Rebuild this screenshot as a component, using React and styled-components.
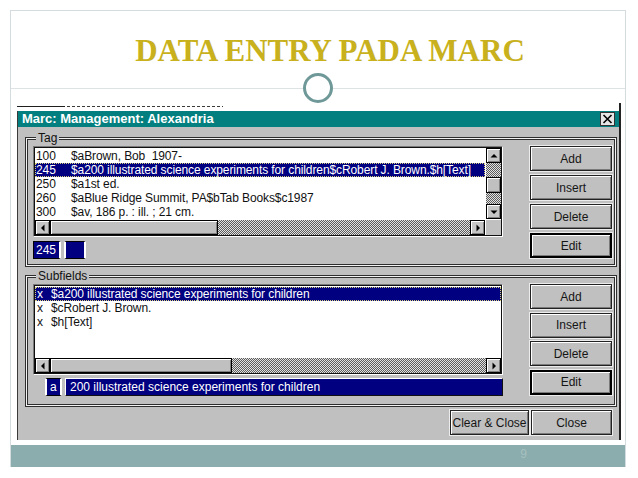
import React from 'react'
import styled, { createGlobalStyle } from 'styled-components'

const GlobalStyle = createGlobalStyle`
  * { box-sizing: border-box; }
  html, body { margin: 0; padding: 0; background: #fff; }
  body {
    width: 638px;
    height: 478px;
    overflow: hidden;
    font-family: "Liberation Sans", Arial, sans-serif;
  }
`

const tagRows = [
  { tag: '100', text: '$aBrown, Bob  1907-' },
  { tag: '245', text: '$a200 illustrated science experiments for children$cRobert J. Brown.$h[Text]', sel: true },
  { tag: '250', text: '$a1st ed.' },
  { tag: '260', text: '$aBlue Ridge Summit, PA$bTab Books$c1987' },
  { tag: '300', text: '$av, 186 p. : ill. ; 21 cm.' },
]

const subRows = [
  { text: '$a200 illustrated science experiments for children', sel: true },
  { text: '$cRobert J. Brown.' },
  { text: '$h[Text]' },
]

const arrowPoints = {
  up: '0.5,5.5 4,2 7.5,5.5',
  down: '0.5,2.5 4,6 7.5,2.5',
  left: '5.5,0.5 2,4 5.5,7.5',
  right: '2.5,0.5 6,4 2.5,7.5',
}

function Arrow({ dir }) {
  return (
    <ArrowBtn>
      <svg width="8" height="8" viewBox="0 0 8 8">
        <polygon points={arrowPoints[dir]} fill="#000" />
      </svg>
    </ArrowBtn>
  )
}

function HScroll({ thumb }) {
  return (
    <HBar>
      <Arrow dir="left" />
      <HThumb $w={thumb} />
      <Track />
      <Arrow dir="right" />
    </HBar>
  )
}

function ButtonStack({ gap }) {
  return (
    <Stack $gap={gap}>
      <WinButton>Add</WinButton>
      <WinButton>Insert</WinButton>
      <WinButton>Delete</WinButton>
      <WinButton $default>Edit</WinButton>
    </Stack>
  )
}

function App() {
  return (
    <>
      <GlobalStyle />
      <Page>
        <Frame>
          <Header>
            <Title>DATA ENTRY PADA MARC</Title>
            <Divider>
              <Rule />
              <Ring />
              <Rule />
            </Divider>
          </Header>

          <Desk>
            <GhostLine />
            <Window>
              <TitleBar>
                <span>Marc: Management: Alexandria</span>
                <CloseBox>
                  <svg width="11" height="10" viewBox="0 0 11 10">
                    <path d="M1.5 1 L9.5 9 M9.5 1 L1.5 9" stroke="#000" strokeWidth="1.6" />
                  </svg>
                </CloseBox>
              </TitleBar>

              <Body>
                <Group $pb={5}>
                  <Legend>Tag</Legend>
                  <LeftCol>
                    <ListBox $vscroll>
                      <Rows>
                        {tagRows.map(r => (
                          <Row key={r.tag} $sel={r.sel}>
                            <TagCell>{r.tag}</TagCell>
                            <span>{r.text}</span>
                          </Row>
                        ))}
                      </Rows>
                      <VBar>
                        <Arrow dir="up" />
                        <VTrack $h={14} />
                        <VThumb />
                        <VTrack />
                        <Arrow dir="down" />
                      </VBar>
                      <HScroll thumb={168} />
                      <Corner />
                    </ListBox>
                    <FieldRow>
                      <CodeBox>245</CodeBox>
                      <IndBox />
                    </FieldRow>
                  </LeftCol>
                  <ButtonStack gap={4} />
                </Group>

                <Group $pb={8}>
                  <Legend>Subfields</Legend>
                  <LeftCol $gap={3}>
                    <ListBox>
                      <Rows>
                        {subRows.map(r => (
                          <Row key={r.text} $sel={r.sel}>
                            <MarkCell>x</MarkCell>
                            <span>{r.text}</span>
                          </Row>
                        ))}
                      </Rows>
                      <HScroll thumb={182} />
                    </ListBox>
                    <SubFieldRow>
                      <SubCode>a</SubCode>
                      <ValueBox>200 illustrated science experiments for children</ValueBox>
                    </SubFieldRow>
                  </LeftCol>
                  <ButtonStack gap={3.5} />
                </Group>

                <BottomRow>
                  <WinButton $w={79}>Clear &amp; Close</WinButton>
                  <WinButton $w={81}>Close</WinButton>
                </BottomRow>
              </Body>
            </Window>
          </Desk>

          <Bar>
            <PageNo>9</PageNo>
          </Bar>
        </Frame>
      </Page>
    </>
  )
}

export default App

const Page = styled.div`
width:638px;
height:478px;
padding:10px 12px 11px 10px;
`

const Frame = styled.div`
height:457px;
border:1px solid #d5dcdf;
border-bottom:none;
display:flex;
flex-direction:column;
`

const Header = styled.header`
padding-top:24px;
`

const Title = styled.h1`
margin:0;
padding-left:24px;
text-align:center;
font:bold 31px/31px "Liberation Serif", "Times New Roman", serif;
color:#c8b11d;
`

const Divider = styled.div`
margin-top:7px;
height:30px;
display:flex;
align-items:center;
`

const Rule = styled.div`
flex:1;
height:1px;
background:#dde2e4;
`

const Ring = styled.div`
width:30px;
height:30px;
border-radius:50%;
border:3px solid #6f9899;
background:#fff;
`

const Desk = styled.div`
height:337px;
margin:0 4px 0 6px;
padding-top:3px;
display:flex;
flex-direction:column;
border-right:2px solid #222;
`

const GhostLine = styled.div`
width:206px;
height:2px;
margin-bottom:4px;
background:
  linear-gradient(90deg, #1e1e1e 0 48px, transparent 48px),
  repeating-linear-gradient(90deg, #3a3a3a 0 3px, transparent 3px 5px);
`

const Window = styled.div`
flex:1;
display:flex;
flex-direction:column;
background:#c0c0c0;
border-left:1px solid #3a3a3a;
`

const TitleBar = styled.div`
height:16px;
display:flex;
align-items:center;
justify-content:space-between;
padding:0 4px 0 4px;
background:#037f7f;
color:#fff;
font:bold 13px/16px "Liberation Sans", Arial, sans-serif;
`

const CloseBox = styled.div`
width:15px;
height:14px;
display:flex;
align-items:center;
justify-content:center;
background:#e6e6e6;
border:1px solid #333;
`

const Body = styled.div`
flex:1;
display:flex;
flex-direction:column;
gap:3px;
padding:5px 2px 5px 7px;
`

const Group = styled.fieldset`
margin:0;
min-inline-size:0;
padding:2px 2px ${p => p.$pb}px 5px;
border:3px double #2e2e2e;
background:
  linear-gradient(#c0c0c0, #c0c0c0) padding-box,
  linear-gradient(#f2f2f2, #f2f2f2) border-box;
display:grid;
grid-template-columns:470px 82px;
column-gap:27px;
align-items:start;
`

const Legend = styled.legend`
margin-left:3px;
padding:0 2px;
font:12px/12px "Liberation Sans", Arial, sans-serif;
color:#111;
background:#c0c0c0;
`

const LeftCol = styled.div`
display:flex;
flex-direction:column;
gap:${p => p.$gap ?? 4}px;
`

const ListBox = styled.div`
height:91px;
padding:1px;
border:1px solid;
border-color:#7a7a7a #fff #fff #7a7a7a;
box-shadow:inset 0 0 0 1px #111;
display:grid;
grid-template-columns:${p => (p.$vscroll ? '1fr 16px' : '1fr')};
grid-template-rows:1fr 16px;
`

const Rows = styled.div`
background:#fff;
padding-top:1px;
overflow:hidden;
`

const Row = styled.div`
display:flex;
height:14px;
padding-left:1px;
font:12px/14px "Liberation Sans", Arial, sans-serif;
letter-spacing:-0.1px;
white-space:pre;
color:${p => (p.$sel ? '#fff' : '#111')};
background:${p => (p.$sel ? '#000080' : 'transparent')};
outline:${p => (p.$sel ? '1px dotted #d8cf7a' : 'none')};
outline-offset:-1px;
`

const TagCell = styled.span`
width:35px;
flex:none;
`

const MarkCell = styled.span`
width:15px;
flex:none;
padding-left:1px;
`

const ArrowBtn = styled.div`
width:15px;
height:15px;
flex:none;
display:flex;
align-items:center;
justify-content:center;
background:#c6c6c6;
border:1px solid #000;
box-shadow:inset 1px 1px 0 #fff, inset -1px -1px 0 #808080;
`

const Track = styled.div`
flex:${p => (p.$h ? 'none' : '1')};
height:${p => (p.$h ? `${p.$h}px` : 'auto')};
background:repeating-conic-gradient(#5c5c5c 0 25%, #e2e2e2 0 50%) 0 0 / 2px 2px;
`

const VTrack = styled(Track)``

const HBar = styled.div`
display:flex;
height:16px;
padding-top:1px;
background:#fff;
`

const HThumb = styled.div`
width:${p => p.$w}px;
flex:none;
background:#c0c0c0;
border:1px solid #000;
box-shadow:inset 1px 1px 0 #fff, inset -1px -1px 0 #808080;
`

const VBar = styled.div`
display:flex;
flex-direction:column;
padding-left:1px;
background:#fff;
`

const VThumb = styled.div`
height:16px;
flex:none;
background:#c0c0c0;
border:1px solid #000;
box-shadow:inset 1px 1px 0 #fff, inset -1px -1px 0 #808080;
`

const Corner = styled.div`
background:#c0c0c0;
border-left:1px solid #fff;
border-top:1px solid #fff;
`

const FieldRow = styled.div`
display:flex;
height:18px;
gap:3px;
`

const CodeBox = styled.div`
width:28px;
padding-left:2px;
background:#000080;
color:#fff;
font:12px/16px "Liberation Sans", Arial, sans-serif;
border:1px solid #000;
border-right:2px solid #fff;
`

const IndBox = styled.div`
width:22px;
background:#000080;
border:1px solid #000;
border-left:2px solid #fff;
border-right:2px solid #fff;
`

const SubFieldRow = styled.div`
display:flex;
height:18px;
padding-left:12px;
gap:3px;
`

const SubCode = styled.div`
width:17px;
padding-left:3px;
background:#000080;
color:#fff;
font:12px/16px "Liberation Sans", Arial, sans-serif;
border:1px solid #000;
border-left:2px solid #fff;
border-right:2px solid #fff;
`

const ValueBox = styled.div`
flex:1;
padding-left:4px;
background:#000080;
color:#fff;
font:12px/16px "Liberation Sans", Arial, sans-serif;
border:1px solid;
border-color:#fff #111 #111 #fff;
white-space:nowrap;
overflow:hidden;
`

const Stack = styled.div`
display:flex;
flex-direction:column;
gap:${p => p.$gap}px;
`

const WinButton = styled.button`
height:25px;
width:${p => (p.$w ? `${p.$w}px` : '100%')};
margin:0;
padding:0;
font:12px/1 "Liberation Sans", Arial, sans-serif;
color:#151515;
background:#c0c0c0;
border:${p => (p.$default ? '2px solid #000' : '1px solid #222')};
box-shadow:inset 1px 1px 0 #fff, inset -1px -1px 0 #7a7a7a, 0 0 0 1px #ececec;
`

const BottomRow = styled.div`
display:flex;
justify-content:flex-end;
gap:2px;
padding-right:5px;
`

const Bar = styled.div`
height:22px;
margin-top:auto;
background:#8badad;
display:flex;
justify-content:flex-end;
padding:2px 98px 0 0;
`

const PageNo = styled.span`
font:12px/14px "Liberation Sans", Arial, sans-serif;
color:#a6c0c0;
`
